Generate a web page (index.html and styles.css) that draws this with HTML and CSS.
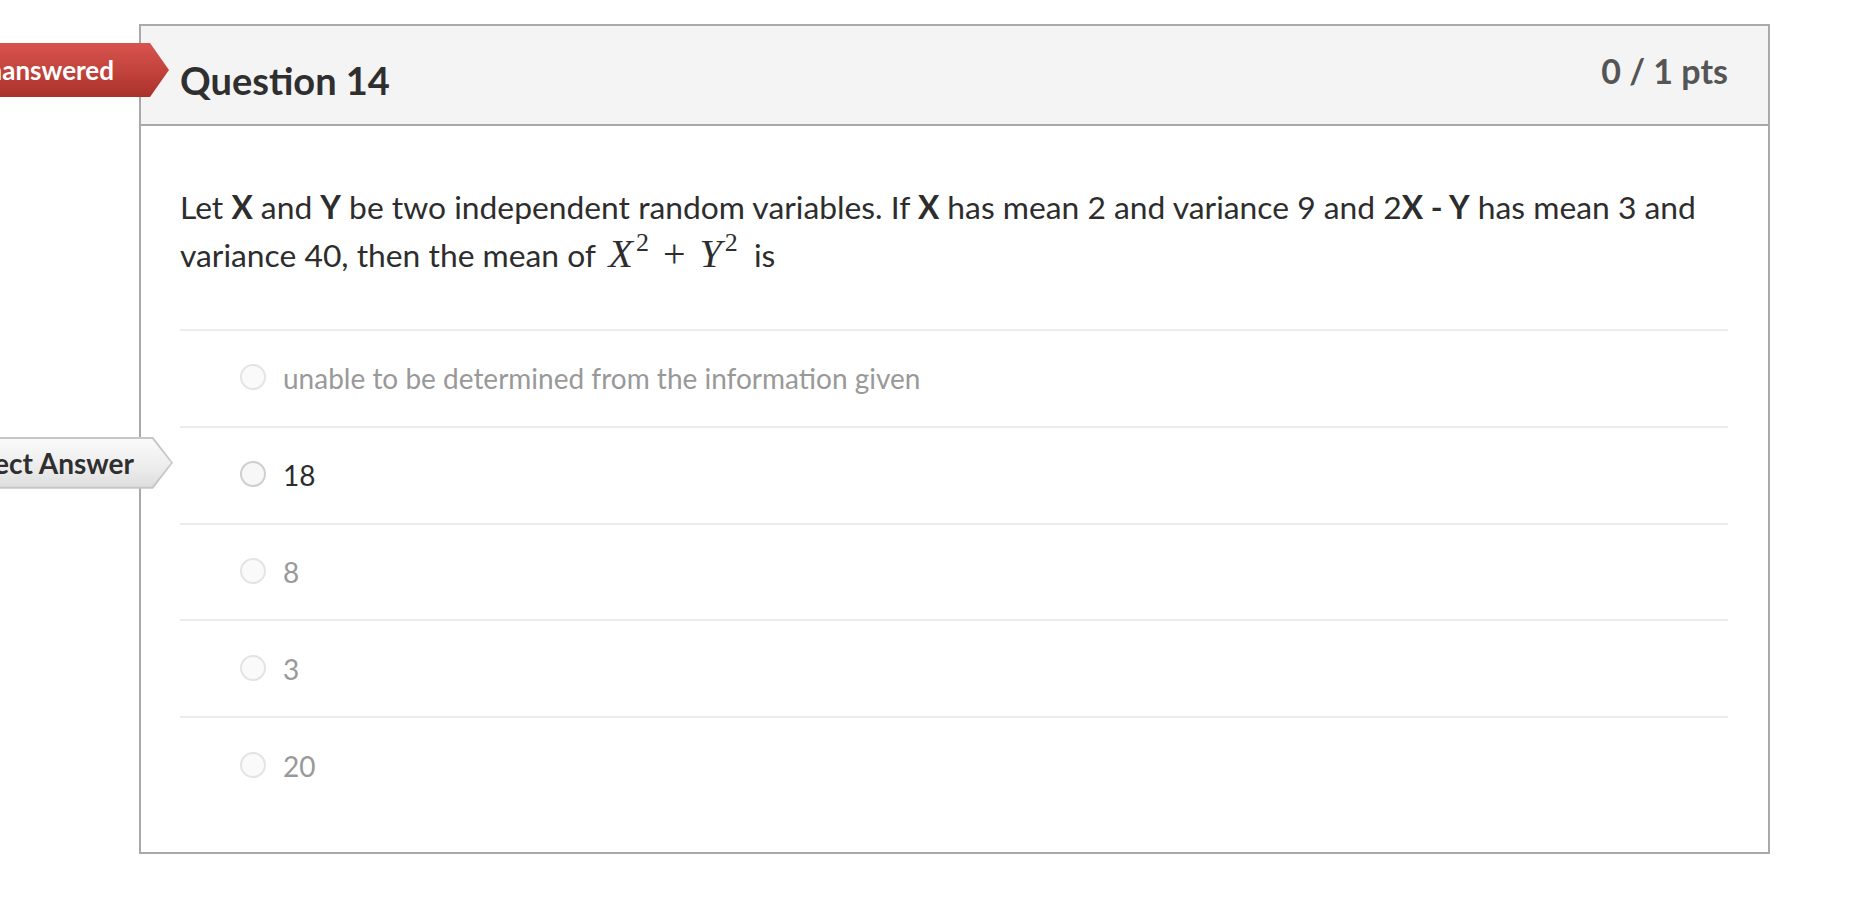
FILE: index.html
```html
<!DOCTYPE html>
<html lang="en">
<head>
<meta charset="utf-8">
<title>Question 14</title>
<link rel="stylesheet" href="styles.css">
</head>
<body>
<div class="page">
  <div class="question">
    <div class="q-header">
      <div class="badge badge-red"><span class="badge-text">Unanswered</span></div>
      <h2 class="q-title">Question 14</h2>
      <div class="q-points">0 / 1 pts</div>
    </div>
    <div class="q-body">
      <p class="q-text">Let <b>X</b> and <b>Y</b> be two independent random variables. If <b>X</b> has mean 2 and variance 9 and 2<b>X - Y</b> has mean 3 and variance 40, then the mean of <span class="math"><i>X</i><sup>2</sup><span class="op">+</span><i>Y</i><sup>2</sup></span> is</p>
      <div class="answers">
        <div class="answer muted"><span class="radio"></span><span class="a-text">unable to be determined from the information given</span></div>
        <div class="answer correct">
          <div class="badge badge-gray"><span class="badge-inner">Correct Answer</span></div>
          <span class="radio"></span><span class="a-text">18</span>
        </div>
        <div class="answer muted"><span class="radio"></span><span class="a-text">8</span></div>
        <div class="answer muted"><span class="radio"></span><span class="a-text">3</span></div>
        <div class="answer muted"><span class="radio"></span><span class="a-text">20</span></div>
      </div>
    </div>
  </div>
</div>
</body>
</html>
```

FILE: styles.css
```css
html, body {
  margin: 0;
  padding: 0;
  background: #ffffff;
  overflow: hidden;
}

body {
  font-family: Lato, "Open Sans", "Liberation Sans", sans-serif;
  color: #333333;
}

.page {
  padding: 24px 0 0 139px;
}

.question {
  position: relative;
  width: 1631px;
  box-sizing: border-box;
  border: 2px solid #a9a9a9;
  background: #ffffff;
}

.q-header {
  position: relative;
  height: 98px;
  background: #f4f4f4;
  border-bottom: 2px solid #a9a9a9;
  display: flex;
  justify-content: space-between;
  align-items: flex-start;
  padding: 0 40px 0 39px;
}

.q-title {
  margin: 35px 0 0 0;
  font-size: 38px;
  line-height: 38px;
  font-weight: 700;
  color: #2f2f2f;
}

.q-points {
  margin-top: 28px;
  font-size: 34px;
  line-height: 34px;
  font-weight: 700;
  color: #555555;
}

/* badges */
.badge {
  position: absolute;
  display: flex;
  align-items: center;
  justify-content: flex-end;
  box-sizing: border-box;
  white-space: nowrap;
}

.badge-red {
  top: 17px;
  right: calc(100% - 28px);
  width: 240px;
  height: 54px;
  padding-right: 55px;
  background: linear-gradient(#d9534e, #c0423b 55%, #a9322b);
  clip-path: polygon(0 0, calc(100% - 19px) 0, 100% 50%, calc(100% - 19px) 100%, 0 100%);
}

.badge-text {
  color: #ffffff;
  font-size: 26px;
  font-weight: 700;
}

.badge-gray {
  top: 9px;
  right: calc(100% + 7px);
  width: 260px;
  height: 52px;
  padding: 2px;
  background: #c6c6c6;
  clip-path: polygon(0 0, calc(100% - 20px) 0, 100% 50%, calc(100% - 20px) 100%, 0 100%);
}

.badge-inner {
  display: flex;
  align-items: center;
  justify-content: flex-end;
  width: 100%;
  height: 100%;
  box-sizing: border-box;
  padding-right: 37px;
  background: linear-gradient(#fafafa, #ececec 60%, #dedede);
  clip-path: polygon(0 0, calc(100% - 19px) 0, 100% 50%, calc(100% - 19px) 100%, 0 100%);
  color: #2f2f2f;
  font-size: 28px;
  font-weight: 700;
}

/* body */
.q-body {
  padding: 57px 40px 39px 39px;
}

.q-text {
  margin: 0;
  font-size: 31.8px;
  line-height: 48px;
  color: #2d2d2d;
}

.q-text b {
  font-weight: 700;
}

.math {
  font-family: "Liberation Serif", "DejaVu Serif", serif;
  font-size: 40px;
  line-height: 38px;
  white-space: nowrap;
  padding: 0 8px 0 5px;
}

.math i {
  font-style: italic;
}

.math sup {
  font-size: 26px;
  vertical-align: 0;
  position: relative;
  top: -16px;
  margin-left: 3px;
}

.math .op {
  margin: 0 14px;
}

.answers {
  margin-top: 50px;
}

.answer {
  position: relative;
  height: 94.8px;
  border-top: 2px solid #ececec;
  display: flex;
  align-items: center;
  padding-left: 60px;
}

.radio {
  width: 22px;
  height: 22px;
  border-radius: 50%;
  border: 2px solid #e4e4e4;
  background: #fafafa;
  flex-shrink: 0;
  margin-top: -2px;
}

.correct .radio {
  border-color: #cfcfcf;
  background: #f7f7f7;
}

.a-text {
  margin-left: 17px;
  font-size: 28px;
  line-height: 32px;
  color: #999999;
}

.correct .a-text {
  color: #2d2d2d;
}
```
